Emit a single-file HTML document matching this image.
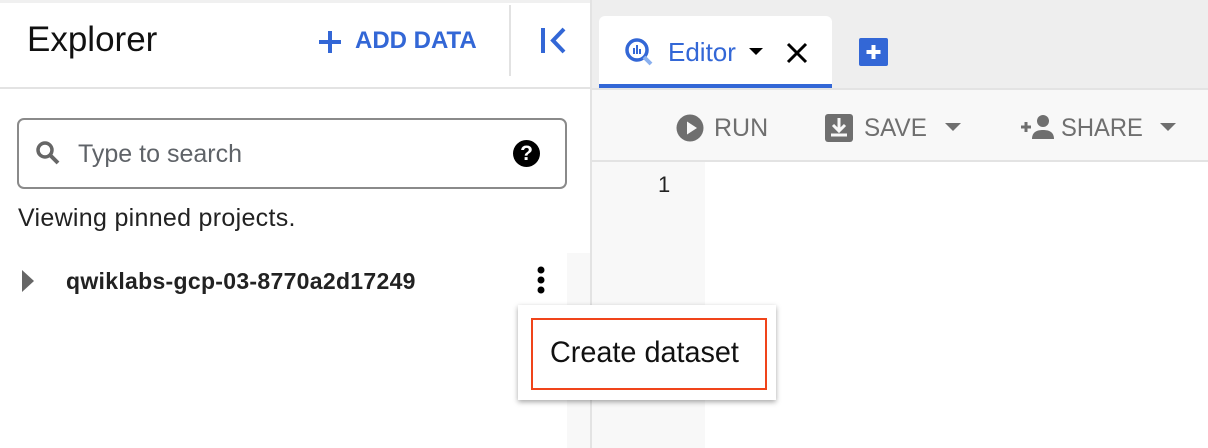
<!DOCTYPE html>
<html><head><style>
body{margin:0;width:1208px;height:448px;position:relative;overflow:hidden;font-family:"Liberation Sans",sans-serif;background:#fff}
.a{position:absolute;white-space:nowrap}
</style></head><body>
<!-- left panel -->
<div class="a" style="left:0;top:0;width:590px;height:3px;background:#f0f0f0"></div>
<div class="a" style="left:27px;top:20px;font-size:35px;color:#111">Explorer</div>
<svg class="a" style="left:317px;top:29px" width="26" height="26"><path d="M13 2v22M2 13h22" stroke="#3367d6" stroke-width="4"/></svg>
<div class="a" style="left:355px;top:27px;font-size:24px;font-weight:bold;color:#3367d6">ADD DATA</div>
<div class="a" style="left:509px;top:5px;width:2px;height:71px;background:#e2e2e2"></div>
<svg class="a" style="left:540px;top:27px" width="30" height="27"><path d="M3 1v25" stroke="#3367d6" stroke-width="4"/><path d="M24 2L13 13.5 24 25" stroke="#3367d6" stroke-width="4" fill="none"/></svg>
<div class="a" style="left:0;top:87px;width:590px;height:2px;background:#e3e3e3"></div>
<div class="a" style="left:17px;top:118px;width:546px;height:67px;border:2px solid #8a8a8a;border-radius:7px"></div>
<svg class="a" style="left:35px;top:140px" width="26" height="26"><circle cx="10" cy="10" r="7" stroke="#666" stroke-width="3.5" fill="none"/><path d="M15 15l8 8" stroke="#666" stroke-width="4"/></svg>
<div class="a" style="left:78px;top:140px;font-size:25px;color:#5f6368">Type to search</div>
<div class="a" style="left:513px;top:140px;width:27px;height:27px;border-radius:50%;background:#000;color:#fff;font-weight:bold;font-size:21px;text-align:center;line-height:27px">?</div>
<div class="a" style="left:18px;top:204px;font-size:25px;letter-spacing:.3px;color:#222">Viewing pinned projects.</div>
<svg class="a" style="left:20px;top:268px" width="16" height="26"><path d="M2 2l12 11-12 11z" fill="#666"/></svg>
<div class="a" style="left:66px;top:268px;font-size:23px;color:#222;font-weight:bold;letter-spacing:.3px">qwiklabs-gcp-03-8770a2d17249</div>
<div class="a" style="left:567px;top:253px;width:23px;height:195px;background:#f8f8f8"></div>
<svg class="a" style="left:535px;top:265px" width="12" height="32"><circle cx="6" cy="5" r="3.5"/><circle cx="6" cy="15" r="3.5"/><circle cx="6" cy="25" r="3.5"/></svg>
<!-- right -->
<div class="a" style="left:590px;top:0;width:2px;height:448px;background:#e3e3e3"></div>
<div class="a" style="left:592px;top:0;width:616px;height:88px;background:#eeeeee"></div>
<div class="a" style="left:599px;top:16px;width:233px;height:72px;background:#fff;border-radius:6px 6px 0 0"></div>
<div class="a" style="left:599px;top:84px;width:233px;height:4px;background:#3367d6"></div>
<svg class="a" style="left:624px;top:37px" width="36" height="30"><circle cx="13" cy="13" r="10" stroke="#3367d6" stroke-width="3.5" fill="none"/><path d="M10 11v6M13 8v9M16 12v5" stroke="#3367d6" stroke-width="2"/><path d="M20 20l7 7" stroke="#8ab0ef" stroke-width="4"/></svg>
<div class="a" style="left:668px;top:37px;font-size:26px;color:#3367d6">Editor</div>
<svg class="a" style="left:748px;top:47px" width="16" height="10"><path d="M1 1h14L8 8z"/></svg>
<svg class="a" style="left:785px;top:41px" width="24" height="24"><path d="M3 3l18 18M21 3L3 21" stroke="#000" stroke-width="3"/></svg>
<div class="a" style="left:859px;top:38px;width:29px;height:28px;background:#3367d6;border-radius:2px"></div>
<svg class="a" style="left:859px;top:38px" width="29" height="28"><path d="M14.5 7v14M7.5 14h14" stroke="#fff" stroke-width="4"/></svg>
<div class="a" style="left:592px;top:88px;width:616px;height:74px;background:#f8f8f8;border-top:2px solid #e3e3e3;border-bottom:2px solid #e3e3e3;box-sizing:border-box"></div>
<svg class="a" style="left:676px;top:114px" width="28" height="28"><circle cx="14" cy="14" r="13.5" fill="#6f6f6f"/><path d="M11 7.5v13l10-6.5z" fill="#f8f8f8"/></svg>
<div class="a" style="left:714px;top:114px;font-size:25px;color:#6f6f6f">RUN</div>
<svg class="a" style="left:824px;top:113px" width="30" height="30"><rect x="1" y="1" width="28" height="28" rx="3" fill="#6f6f6f"/><path d="M15 5v12M9 12l6 6 6-6M7 22h16" stroke="#f8f8f8" stroke-width="3" fill="none"/></svg>
<div class="a" style="left:864px;top:114px;font-size:25px;color:#6f6f6f;transform:scaleX(.97);transform-origin:left">SAVE</div>
<svg class="a" style="left:944px;top:122px" width="18" height="10"><path d="M1 1h16L9 9z" fill="#6f6f6f"/></svg>
<svg class="a" style="left:1020px;top:114px" width="34" height="26"><path d="M6 8v10M1 13h10" stroke="#6f6f6f" stroke-width="3"/><circle cx="23" cy="7" r="6" fill="#6f6f6f"/><path d="M12 25c0-7 5-9 11-9s11 2 11 9z" fill="#6f6f6f"/></svg>
<div class="a" style="left:1061px;top:114px;font-size:25px;color:#6f6f6f;transform:scaleX(.95);transform-origin:left">SHARE</div>
<svg class="a" style="left:1159px;top:122px" width="18" height="10"><path d="M1 1h16L9 9z" fill="#6f6f6f"/></svg>
<div class="a" style="left:592px;top:162px;width:113px;height:286px;background:#f8f8f8"></div>
<div class="a" style="left:658px;top:172px;font-size:22px;color:#222">1</div>
<!-- menu -->
<div class="a" style="left:518px;top:305px;width:258px;height:95px;background:#fff;box-shadow:0 2px 5px rgba(0,0,0,.35)"></div>
<div class="a" style="left:531px;top:318px;width:232px;height:68px;border:2px solid #f0441a"></div>
<div class="a" style="left:550px;top:336px;font-size:30px;color:#111;transform:scaleX(.96);transform-origin:left">Create dataset</div>
</body></html>
